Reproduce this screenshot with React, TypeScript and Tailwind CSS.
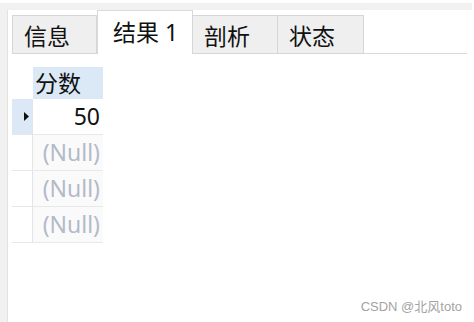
const tabs = [
  { label: "信息", width: "w-[85px]", active: false },
  { label: "结果 1", width: "w-[96px]", active: true },
  { label: "剖析", width: "w-[86px]", active: false },
  { label: "状态", width: "w-[87px]", active: false },
];

const rows = ["50", "(Null)", "(Null)", "(Null)"];

function Tab({ label, width, active }: { label: string; width: string; active: boolean }) {
  if (active) {
    return (
      <div
        className={`${width} flex h-[44px] items-center border-x border-t border-[#dadada] bg-white pl-[15px] pb-[1px] text-[23px] text-[#111]`}
      >
        {label}
      </div>
    );
  }
  return (
    <div
      className={`${width} -ml-px flex h-[39px] items-center border border-[#d6d6d6] bg-[#efefef] pl-[11px] pt-[4px] text-[23px] text-[#111] first:ml-0`}
    >
      {label}
    </div>
  );
}

export default function App() {
  return (
    <div
      className="relative flex h-[322px] w-[474px] flex-col overflow-hidden bg-white"
      style={{ fontFamily: '"Noto Sans", "Noto Sans CJK SC", sans-serif' }}
    >
      <div className="mt-[3px] h-[7px] w-[472px] bg-[#f1f1f1]" />
      <div className="flex flex-1">
        <div className="w-[8px] border-r border-[#e2e2e2] bg-[#f1f1f1]" />
        <div className="flex flex-1 flex-col pl-[4px]">
          <div className="flex items-end leading-none">
            {tabs.map((t) => (
              <Tab key={t.label} {...t} />
            ))}
            <div className="mr-[7px] flex-1 border-b border-[#dadada]" />
          </div>

          <div className="mt-[13px] flex w-[91px] flex-col text-[23px] leading-none">
            <div className="flex h-[32px]">
              <div className="w-[21px] bg-white" />
              <div className="flex w-[70px] items-center bg-[#dbe9f7] pl-[2px] text-[#111]">分数</div>
            </div>
            {rows.map((v, i) => (
              <div key={i} className="flex h-[36px] border-b border-[#e8e8e8]">
                <div
                  className={`flex w-[21px] items-center justify-center border-r border-[#e4e4e4] ${
                    i === 0 ? "bg-[#dce8f5]" : "bg-white"
                  }`}
                >
                  {i === 0 && (
                    <svg width="5" height="9" viewBox="0 0 5 9" className="ml-[8px]">
                      <path d="M0 0 L5 4.5 L0 9 Z" fill="#111" />
                    </svg>
                  )}
                </div>
                <div
                  className={`flex w-[70px] items-center justify-end pr-[3px] ${
                    i === 0 ? "bg-white text-[#111]" : "bg-[#fafafa] text-[#b3bac9]"
                  }`}
                >
                  {v}
                </div>
              </div>
            ))}
          </div>
        </div>
      </div>

      <div
        className="absolute right-[12px] bottom-[6px] text-[13px] text-[#a3a3a3]"
        style={{ fontFamily: '"Liberation Sans", "Noto Sans CJK SC", sans-serif' }}
      >
        CSDN @北风toto
      </div>
    </div>
  );
}
